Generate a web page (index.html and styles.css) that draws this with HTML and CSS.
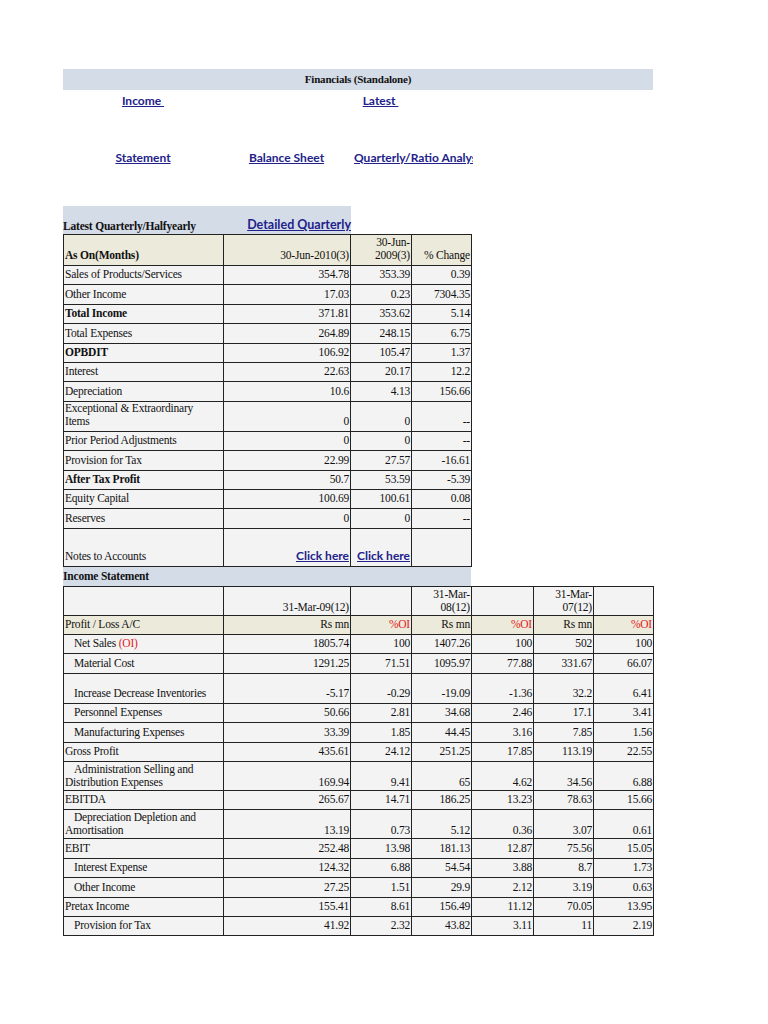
FILE: index.html
```html
<!DOCTYPE html>
<html>
<head>
<meta charset="utf-8">
<title>Financials (Standalone)</title>
<link rel="stylesheet" href="styles.css">
</head>
<body>
<div class="sheet">
  <div class="title">Financials (Standalone)</div>

  <div class="links r1">
    <div class="cell center"><a href="#">Income&nbsp;</a></div>
    <div class="cell"></div>
    <div class="cell center"><a href="#">Latest&nbsp;</a></div>
    <div class="cell"></div>
  </div>

  <div class="links r2">
    <div class="cell center"><a href="#">Statement</a></div>
    <div class="cell center"><a href="#">Balance Sheet</a></div>
    <div class="cell clip"><a href="#">Quarterly/Ratio Analysis</a></div>
  </div>

  <div class="band latest">
    <span class="b">Latest Quarterly/Halfyearly</span>
    <a class="lnk" href="#">Detailed Quarterly</a>
  </div>

  <table class="grid t1">
    <colgroup><col class="ca"><col class="cb"><col class="cc"><col class="cd"></colgroup>
    <tr class="hdr h31">
      <td class="l b">As On(Months)</td><td>30-Jun-2010(3)</td><td>30-Jun-<br>2009(3)</td><td>% Change</td>
    </tr>
    <tr><td class="l">Sales of Products/Services</td><td>354.78</td><td>353.39</td><td>0.39</td></tr>
    <tr><td class="l">Other Income</td><td>17.03</td><td>0.23</td><td>7304.35</td></tr>
    <tr><td class="l b">Total Income</td><td>371.81</td><td>353.62</td><td>5.14</td></tr>
    <tr><td class="l">Total Expenses</td><td>264.89</td><td>248.15</td><td>6.75</td></tr>
    <tr><td class="l b">OPBDIT</td><td>106.92</td><td>105.47</td><td>1.37</td></tr>
    <tr><td class="l">Interest</td><td>22.63</td><td>20.17</td><td>12.2</td></tr>
    <tr><td class="l">Depreciation</td><td>10.6</td><td>4.13</td><td>156.66</td></tr>
    <tr class="h30"><td class="l">Exceptional &amp; Extraordinary<br>Items</td><td>0</td><td>0</td><td>--</td></tr>
    <tr><td class="l">Prior Period Adjustments</td><td>0</td><td>0</td><td>--</td></tr>
    <tr><td class="l">Provision for Tax</td><td>22.99</td><td>27.57</td><td>-16.61</td></tr>
    <tr><td class="l b">After Tax Profit</td><td>50.7</td><td>53.59</td><td>-5.39</td></tr>
    <tr><td class="l">Equity Capital</td><td>100.69</td><td>100.61</td><td>0.08</td></tr>
    <tr><td class="l">Reserves</td><td>0</td><td>0</td><td>--</td></tr>
    <tr class="h38"><td class="l">Notes to Accounts</td><td><a class="lnk" href="#">Click here</a></td><td><a class="lnk" href="#">Click here</a></td><td></td></tr>
  </table>

  <div class="band inc b">Income Statement</div>

  <table class="grid t2">
    <colgroup><col class="ca"><col class="cb"><col class="cc"><col class="cd"><col class="ce"><col class="cf"><col class="cg"></colgroup>
    <tr class="h29">
      <td class="l"></td><td>31-Mar-09(12)</td><td></td><td>31-Mar-<br>08(12)</td><td></td><td>31-Mar-<br>07(12)</td><td></td>
    </tr>
    <tr class="hdr">
      <td class="l">Profit / Loss A/C</td><td>Rs mn</td><td class="red">%OI</td><td>Rs mn</td><td class="red">%OI</td><td>Rs mn</td><td class="red">%OI</td>
    </tr>
    <tr><td class="l in">Net Sales <span class="red">(OI)</span></td><td>1805.74</td><td>100</td><td>1407.26</td><td>100</td><td>502</td><td>100</td></tr>
    <tr><td class="l in">Material Cost</td><td>1291.25</td><td>71.51</td><td>1095.97</td><td>77.88</td><td>331.67</td><td>66.07</td></tr>
    <tr class="h30"><td class="l in">Increase Decrease Inventories</td><td>-5.17</td><td>-0.29</td><td>-19.09</td><td>-1.36</td><td>32.2</td><td>6.41</td></tr>
    <tr><td class="l in">Personnel Expenses</td><td>50.66</td><td>2.81</td><td>34.68</td><td>2.46</td><td>17.1</td><td>3.41</td></tr>
    <tr><td class="l in">Manufacturing Expenses</td><td>33.39</td><td>1.85</td><td>44.45</td><td>3.16</td><td>7.85</td><td>1.56</td></tr>
    <tr><td class="l">Gross Profit</td><td>435.61</td><td>24.12</td><td>251.25</td><td>17.85</td><td>113.19</td><td>22.55</td></tr>
    <tr class="h29"><td class="l ti">Administration Selling and<br>Distribution Expenses</td><td>169.94</td><td>9.41</td><td>65</td><td>4.62</td><td>34.56</td><td>6.88</td></tr>
    <tr><td class="l">EBITDA</td><td>265.67</td><td>14.71</td><td>186.25</td><td>13.23</td><td>78.63</td><td>15.66</td></tr>
    <tr class="h29"><td class="l ti">Depreciation Depletion and<br>Amortisation</td><td>13.19</td><td>0.73</td><td>5.12</td><td>0.36</td><td>3.07</td><td>0.61</td></tr>
    <tr><td class="l">EBIT</td><td>252.48</td><td>13.98</td><td>181.13</td><td>12.87</td><td>75.56</td><td>15.05</td></tr>
    <tr><td class="l in">Interest Expense</td><td>124.32</td><td>6.88</td><td>54.54</td><td>3.88</td><td>8.7</td><td>1.73</td></tr>
    <tr><td class="l in">Other Income</td><td>27.25</td><td>1.51</td><td>29.9</td><td>2.12</td><td>3.19</td><td>0.63</td></tr>
    <tr><td class="l">Pretax Income</td><td>155.41</td><td>8.61</td><td>156.49</td><td>11.12</td><td>70.05</td><td>13.95</td></tr>
    <tr><td class="l in">Provision for Tax</td><td>41.92</td><td>2.32</td><td>43.82</td><td>3.11</td><td>11</td><td>2.19</td></tr>
  </table>
</div>
</body>
</html>
```

FILE: styles.css
```css
html, body {
  margin: 0;
  padding: 0;
  background: #ffffff;
}

body {
  font-family: "Liberation Serif", "Times New Roman", serif;
  font-size: 11.5px;
  letter-spacing: -0.2px;
  color: #111111;
}

.sheet {
  padding: 69px 0 0 63px;
  width: 590px;
}

.b {
  font-weight: bold;
}

.title {
  height: 21px;
  line-height: 21px;
  background: #d4dce8;
  text-align: center;
  font-weight: bold;
  font-size: 11px;
}

.links {
  display: grid;
  grid-template-columns: 160px 127px 61px 60px;
  height: 20px;
  align-items: center;
  font-family: Lato, "Liberation Sans", sans-serif;
  font-weight: 700;
  font-size: 12px;
  letter-spacing: 0;
}

.links a,
a.lnk {
  color: #22228a;
  text-decoration: underline;
}

.r2 {
  margin-top: 37px;
}

.cell {
  white-space: nowrap;
}

.center {
  text-align: center;
}

.clip {
  grid-column: 3 / span 2;
  width: 119px;
  padding-left: 4px;
  overflow: hidden;
}

.band {
  background: #d4dce8;
}

.latest {
  margin-top: 39px;
  width: 288px;
  height: 28px;
  display: flex;
  justify-content: space-between;
  align-items: flex-end;
  line-height: 13px;
}

.latest .b {
  padding-bottom: 1px;
}

.latest .lnk {
  font-family: Lato, "Liberation Sans", sans-serif;
  font-weight: 700;
  font-size: 12.5px;
  letter-spacing: 0;
  line-height: 15px;
  padding-bottom: 2px;
}

.inc {
  width: 408px;
  height: 19px;
  line-height: 18px;
}

.grid {
  border-collapse: collapse;
  table-layout: fixed;
}

.t1 { width: 408px; }
.t2 { width: 590px; }

col.ca { width: 160px; }
col.cb { width: 127px; }
col.cc { width: 61px; }
col.cd { width: 60px; }
col.ce { width: 62px; }
col.cf { width: 60px; }
col.cg { width: 60px; }

.grid td {
  border: 1px solid #222222;
  padding: 0 1px 3px 1px;
  height: 19.4px;
  box-sizing: border-box;
  vertical-align: bottom;
  text-align: right;
  line-height: 13px;
  white-space: nowrap;
  overflow: hidden;
  background: #f3f3f3;
}

.grid td.l {
  text-align: left;
}

.grid td.in {
  padding-left: 10px;
}

.grid td.ti {
  text-indent: 9px;
}

.grid tr.hdr td {
  background: #eceada;
}

.grid tr.h31 td { height: 31px; }
.grid tr.h30 td { height: 30px; }
.grid tr.h29 td { height: 29px; padding-bottom: 1px; }
.grid tr.h38 td { height: 38px; }

.grid td .lnk {
  font-family: Lato, "Liberation Sans", sans-serif;
  font-weight: 700;
  font-size: 12px;
  letter-spacing: 0;
}

.red {
  color: #e3211f;
}
```
